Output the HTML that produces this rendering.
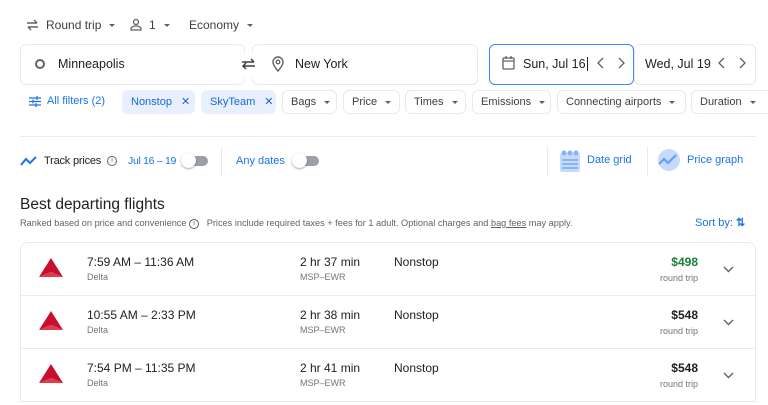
<!DOCTYPE html>
<html><head><style>
*{margin:0;padding:0;box-sizing:border-box}
body{width:768px;height:405px;overflow:hidden;background:#fff;font-family:"Liberation Sans",sans-serif;color:#3c4043;position:relative}
.a{position:absolute;white-space:nowrap}
.box{position:absolute;border:1px solid #e8eaed;border-radius:6px}
.chip{position:absolute;top:90px;height:24px;border:1px solid #e8eaed;border-radius:6px;font-size:11px;line-height:22px;padding-left:8px;color:#3c4043;overflow:hidden}
.chip.sel{background:#e8f0fe;border-color:#e8f0fe;color:#1967d2}
.car{display:inline-block;width:0;height:0;border-left:3px solid transparent;border-right:3px solid transparent;border-top:3px solid #5f6368;vertical-align:middle;margin-left:8px}
.row{position:absolute;left:20px;width:736px;height:54px;border:1px solid #e8eaed}
.t{position:absolute;left:66px;top:12px;font-size:12px;color:#202124}
.s{position:absolute;font-size:9px;color:#70757a;top:29px}
.d{position:absolute;left:279px;top:12px;font-size:12px;color:#202124}
.n{position:absolute;left:373px;top:12px;font-size:12px;color:#202124}
.p{position:absolute;right:57px;top:12px;font-size:12px;font-weight:bold;color:#202124;text-align:right}
.rt{position:absolute;right:57px;top:30px;font-size:9px;color:#70757a}
.chev{position:absolute;right:21px;top:23px}
.logo{position:absolute;left:17px;top:14px}
.ar{position:absolute;top:57px}
</style></head><body>
<svg class="a" style="left:26px;top:19px" width="13" height="12" viewBox="0 0 13 12"><path d="M1 4h10M8 1l3 3M12 8H2M5 11L2 8" stroke="#5f6368" stroke-width="1.4" fill="none"/></svg>
<div class="a" style="left:46px;top:18px;font-size:12px">Round trip<span class="car"></span></div>
<svg class="a" style="left:130px;top:18px" width="12" height="13" viewBox="0 0 12 13"><circle cx="6" cy="4" r="2.5" stroke="#5f6368" stroke-width="1.3" fill="none"/><path d="M1 12v-1.5c0-1.5 3-2.5 5-2.5s5 1 5 2.5V12z" stroke="#5f6368" stroke-width="1.3" fill="none"/></svg>
<div class="a" style="left:149px;top:18px;font-size:12px">1<span class="car"></span></div>
<div class="a" style="left:189px;top:18px;font-size:12px">Economy<span class="car"></span></div>

<div class="box" style="left:20px;top:44px;width:225px;height:41px"></div>
<div class="box" style="left:252px;top:44px;width:226px;height:41px"></div>
<div class="a" style="left:35px;top:59px;width:10px;height:10px;border:2px solid #5f6368;border-radius:50%"></div>
<div class="a" style="left:58px;top:57px;font-size:12.5px;color:#202124">Minneapolis</div>
<div class="a" style="left:236px;top:52px;width:26px;height:26px;border-radius:50%;background:#fff"></div>
<svg class="a" style="left:240px;top:57px" width="17" height="14" viewBox="0 0 17 14"><path d="M3 9h12M6 6L3 9l3 3M14 5H2M11 2l3 3" stroke="#3c4043" stroke-width="1.5" fill="none"/></svg>
<svg class="a" style="left:272px;top:56px" width="12" height="16" viewBox="0 0 12 16"><path d="M6 15s-5-5.5-5-9a5 5 0 0110 0c0 3.5-5 9-5 9z" stroke="#5f6368" stroke-width="1.4" fill="none"/><circle cx="6" cy="6" r="1.8" stroke="#5f6368" stroke-width="1.3" fill="none"/></svg>
<div class="a" style="left:295px;top:57px;font-size:12.5px;color:#202124">New York</div>

<div class="box" style="left:634px;top:44px;width:122px;height:41px"></div>
<div class="box" style="left:489px;top:44px;width:145px;height:41px;border-color:#4285f4"></div>
<svg class="a" style="left:502px;top:56px" width="13" height="14" viewBox="0 0 13 14"><rect x="1" y="2" width="11" height="11" rx="1" stroke="#5f6368" stroke-width="1.3" fill="none"/><path d="M1 5h11M4 0v3M9 0v3" stroke="#5f6368" stroke-width="1.3"/></svg>
<div class="a" style="left:523px;top:57px;font-size:12.5px;color:#202124">Sun, Jul 16<span style="border-left:1px solid #202124;margin-left:1px"></span></div>
<svg class="ar" style="left:597px" width="7" height="12" viewBox="0 0 7 12"><path d="M6 1L1 6l5 5" stroke="#5f6368" stroke-width="1.3" fill="none"/></svg>
<svg class="ar" style="left:618px" width="7" height="12" viewBox="0 0 7 12"><path d="M1 1l5 5-5 5" stroke="#5f6368" stroke-width="1.3" fill="none"/></svg>
<div class="a" style="left:645px;top:57px;font-size:12.5px;color:#202124">Wed, Jul 19</div>
<svg class="ar" style="left:718px" width="7" height="12" viewBox="0 0 7 12"><path d="M6 1L1 6l5 5" stroke="#5f6368" stroke-width="1.3" fill="none"/></svg>
<svg class="ar" style="left:739px" width="7" height="12" viewBox="0 0 7 12"><path d="M1 1l5 5-5 5" stroke="#5f6368" stroke-width="1.3" fill="none"/></svg>

<svg class="a" style="left:29px;top:96px" width="12" height="11" viewBox="0 0 12 11"><path d="M0 2h12M0 5.5h12M0 9h12M8 0v4M4 3.5v4M7 7v4" stroke="#1a73e8" stroke-width="1.2"/></svg>
<div class="a" style="left:47px;top:95px;font-size:11px;color:#1a73e8">All filters (2)</div>
<div class="chip sel" style="left:122px;width:73px">Nonstop <span style="margin-left:6px">✕</span></div>
<div class="chip sel" style="left:201px;width:75px">SkyTeam <span style="margin-left:6px">✕</span></div>
<div class="chip" style="left:282px;width:55px">Bags<span class="car"></span></div>
<div class="chip" style="left:343px;width:57px">Price<span class="car"></span></div>
<div class="chip" style="left:405px;width:61px">Times<span class="car"></span></div>
<div class="chip" style="left:472px;width:79px">Emissions<span class="car"></span></div>
<div class="chip" style="left:557px;width:129px">Connecting airports<span class="car"></span></div>
<div class="chip" style="left:691px;width:77px;border-right:none;border-radius:6px 0 0 6px">Duration<span class="car"></span></div>

<div class="a" style="left:20px;top:136px;width:736px;height:1px;background:#e8eaed"></div>
<div class="a" style="left:221px;top:148px;width:1px;height:28px;background:#e8eaed"></div>
<div class="a" style="left:547px;top:146px;width:1px;height:30px;background:#e8eaed"></div>
<div class="a" style="left:647px;top:146px;width:1px;height:30px;background:#e8eaed"></div>
<svg class="a" style="left:20px;top:155px" width="18" height="12" viewBox="0 0 18 12"><path d="M1 10l5-6 4 4 6-6" stroke="#1a73e8" stroke-width="2" fill="none"/></svg>
<div class="a" style="left:44px;top:155px;font-size:11px;color:#202124;letter-spacing:-0.2px">Track prices</div>
<div class="a" style="left:107px;top:156px;width:10px;height:10px;border:1px solid #5f6368;border-radius:50%;font-size:7px;line-height:8px;text-align:center;color:#5f6368">i</div>
<div class="a" style="left:128px;top:155px;font-size:10.5px;color:#1a73e8;letter-spacing:-0.3px">Jul 16 – 19</div>
<div class="a" style="left:184px;top:156px;width:24px;height:10px;border-radius:5px;background:#9aa0a6"></div>
<div class="a" style="left:181px;top:153px;width:15px;height:15px;border-radius:50%;background:#fff;box-shadow:0 1px 2px rgba(0,0,0,.35)"></div>
<div class="a" style="left:236px;top:155px;font-size:11px;color:#1a73e8">Any dates</div>
<div class="a" style="left:295px;top:156px;width:24px;height:10px;border-radius:5px;background:#9aa0a6"></div>
<div class="a" style="left:292px;top:153px;width:15px;height:15px;border-radius:50%;background:#fff;box-shadow:0 1px 2px rgba(0,0,0,.35)"></div>

<svg class="a" style="left:560px;top:150px" width="20" height="22" viewBox="0 0 20 22"><rect x="0" y="3" width="20" height="19" rx="2" fill="#c6dafc"/><circle cx="4" cy="3" r="2.5" fill="#8ab4f8"/><circle cx="10" cy="3" r="2.5" fill="#8ab4f8"/><circle cx="16" cy="3" r="2.5" fill="#8ab4f8"/><path d="M2 10h16M2 14h16M2 18h16" stroke="#8ab4f8" stroke-width="2"/></svg>
<div class="a" style="left:587px;top:154px;font-size:11px;color:#1a73e8">Date grid</div>
<svg class="a" style="left:658px;top:149px" width="22" height="22" viewBox="0 0 22 22"><circle cx="11" cy="11" r="11" fill="#c6dafc"/><path d="M1 15l5-5 4 4 8-8" stroke="#669df6" stroke-width="2.2" fill="none"/></svg>
<div class="a" style="left:687px;top:154px;font-size:11px;color:#1a73e8">Price graph</div>

<div class="a" style="left:20px;top:196px;font-size:15.5px;color:#202124">Best departing flights</div>
<div class="a" style="left:20px;top:218px;font-size:9.2px;color:#5f6368">Ranked based on price and convenience <span style="display:inline-block;width:10px;height:10px;border:1px solid #5f6368;border-radius:50%;font-size:7px;line-height:8px;text-align:center;vertical-align:middle">i</span> &nbsp; Prices include required taxes + fees for 1 adult. Optional charges and <u>bag fees</u> may apply.</div>
<div class="a" style="left:695px;top:216px;font-size:11px;color:#1a73e8">Sort by: <b>⇅</b></div>

<div class="row" style="top:242px;border-radius:8px 8px 0 0">
<svg class="logo" width="26" height="22" viewBox="0 0 26 22"><path d="M13 1L1 20l12-5 12 5z" fill="#c8102e"/><path d="M1 20l12-5 12 5z" fill="#e03a4e"/></svg>
<div class="t">7:59 AM – 11:36 AM</div><div class="s" style="left:66px">Delta</div>
<div class="d">2 hr 37 min</div><div class="s" style="left:279px">MSP–EWR</div>
<div class="n">Nonstop</div>
<div class="p" style="color:#188038">$498</div><div class="rt">round trip</div>
<svg class="chev" width="11" height="7" viewBox="0 0 11 7"><path d="M1 1l4.5 4.5L10 1" stroke="#5f6368" stroke-width="1.4" fill="none"/></svg>
</div>
<div class="row" style="top:295px">
<svg class="logo" width="26" height="22" viewBox="0 0 26 22"><path d="M13 1L1 20l12-5 12 5z" fill="#c8102e"/><path d="M1 20l12-5 12 5z" fill="#e03a4e"/></svg>
<div class="t">10:55 AM – 2:33 PM</div><div class="s" style="left:66px">Delta</div>
<div class="d">2 hr 38 min</div><div class="s" style="left:279px">MSP–EWR</div>
<div class="n">Nonstop</div>
<div class="p">$548</div><div class="rt">round trip</div>
<svg class="chev" width="11" height="7" viewBox="0 0 11 7"><path d="M1 1l4.5 4.5L10 1" stroke="#5f6368" stroke-width="1.4" fill="none"/></svg>
</div>
<div class="row" style="top:348px">
<svg class="logo" width="26" height="22" viewBox="0 0 26 22"><path d="M13 1L1 20l12-5 12 5z" fill="#c8102e"/><path d="M1 20l12-5 12 5z" fill="#e03a4e"/></svg>
<div class="t">7:54 PM – 11:35 PM</div><div class="s" style="left:66px">Delta</div>
<div class="d">2 hr 41 min</div><div class="s" style="left:279px">MSP–EWR</div>
<div class="n">Nonstop</div>
<div class="p">$548</div><div class="rt">round trip</div>
<svg class="chev" width="11" height="7" viewBox="0 0 11 7"><path d="M1 1l4.5 4.5L10 1" stroke="#5f6368" stroke-width="1.4" fill="none"/></svg>
</div>
</body></html>
